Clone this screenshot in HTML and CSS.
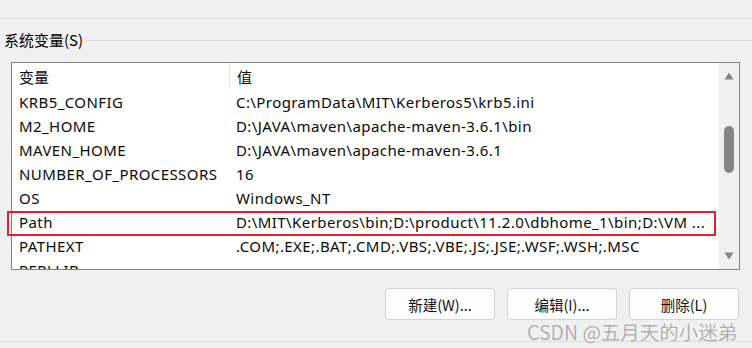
FILE: index.html
```html
<!DOCTYPE html>
<html lang="zh-CN">
<head>
<meta charset="utf-8">
<title>系统变量</title>
<link rel="stylesheet" href="styles.css">
</head>
<body>
<div class="dialog">
  <div class="topline"></div>
  <div class="group-head">
    <span class="group-label">系统变量(S)</span>
    <span class="group-rule"></span>
  </div>
  <div class="list-wrap">
    <div class="listbox">
      <div class="table">
        <div class="row head">
          <div class="c1">变量</div>
          <div class="c2">值</div>
        </div>
        <div class="row"><div class="c1">KRB5_CONFIG</div><div class="c2">C:\ProgramData\MIT\Kerberos5\krb5.ini</div></div>
        <div class="row"><div class="c1">M2_HOME</div><div class="c2">D:\JAVA\maven\apache-maven-3.6.1\bin</div></div>
        <div class="row"><div class="c1">MAVEN_HOME</div><div class="c2">D:\JAVA\maven\apache-maven-3.6.1</div></div>
        <div class="row"><div class="c1">NUMBER_OF_PROCESSORS</div><div class="c2">16</div></div>
        <div class="row"><div class="c1">OS</div><div class="c2">Windows_NT</div></div>
        <div class="row"><div class="c1">Path</div><div class="c2">D:\MIT\Kerberos\bin;D:\product\11.2.0\dbhome_1\bin;D:\VM ...</div></div>
        <div class="row"><div class="c1">PATHEXT</div><div class="c2">.COM;.EXE;.BAT;.CMD;.VBS;.VBE;.JS;.JSE;.WSF;.WSH;.MSC</div></div>
        <div class="row"><div class="c1">PERLLIB</div><div class="c2"></div></div>
      </div>
      <div class="scrollbar">
        <svg class="arrow" width="10" height="8" viewBox="0 0 10 8"><path d="M5 0.5 L9.5 7.5 L0.5 7.5 Z" fill="#858585"/></svg>
        <div class="track"><div class="thumb"></div></div>
        <svg class="arrow" width="10" height="8" viewBox="0 0 10 8"><path d="M0.5 0.5 L9.5 0.5 L5 7.5 Z" fill="#858585"/></svg>
      </div>
    </div>
    <div class="highlight"></div>
  </div>
  <div class="buttons">
    <button class="btn">新建(W)...</button>
    <button class="btn">编辑(I)...</button>
    <button class="btn">删除(L)</button>
  </div>
  <div class="bottomline"></div>
  <div class="watermark">CSDN @五月天的小迷弟</div>
</div>
</body>
</html>
```

FILE: styles.css
```css
* { box-sizing: border-box; }
html, body {
  margin: 0;
  padding: 0;
  background: #f0f0f0;
  width: 752px;
  height: 348px;
  overflow: hidden;
}
body {
  font-family: "Noto Sans", "Noto Sans CJK SC", sans-serif;
  font-size: 15px;
  color: #000;
}
.dialog {
  position: relative;
  width: 752px;
  height: 348px;
}
.topline {
  height: 19px;
  border-bottom: 1px solid #dcdcdc;
}
.group-head {
  display: flex;
  align-items: center;
  height: 42px;
  padding-left: 4px;
}
.group-label {
  font-family: "Noto Sans CJK SC", sans-serif;
  font-size: 15px;
  line-height: 20px;
  white-space: nowrap;
}
.group-rule {
  flex: 1;
  height: 1px;
  background: #dcdcdc;
  margin-left: 3px;
}
.list-wrap {
  position: relative;
  margin-left: 11px;
  width: 729px;
  height: 208px;
  margin-top: 1px;
}
.listbox {
  display: flex;
  height: 100%;
  border: 1px solid #848484;
  background: #fff;
  overflow: hidden;
}
.table {
  flex: 1;
  overflow: hidden;
  letter-spacing: 0.42px;
  color: #0a0a0a;
}
.row {
  display: flex;
  height: 24px;
  align-items: center;
  white-space: nowrap;
}
.row.head {
  height: 27px;
  font-family: "Noto Sans CJK SC", sans-serif;
  font-size: 15px;
  letter-spacing: 0;
  align-items: flex-start;
}
.head .c1 {
  padding-top: 3px;
}
.c1 {
  width: 217px;
  padding-left: 7px;
}
.c2 {
  flex: 1;
  padding-left: 7px;
}
.head .c2 {
  border-left: 1px solid #e5e5e5;
  height: 26px;
  padding-top: 3px;
}
.scrollbar {
  width: 20px;
  background: #f0f0f0;
  display: flex;
  flex-direction: column;
  align-items: center;
  padding: 9px 0 9px;
}
.arrow { display: block; }
.track {
  flex: 1;
  width: 100%;
  display: flex;
  justify-content: center;
  padding-top: 46px;
}
.thumb {
  width: 10px;
  height: 47px;
  border-radius: 5px;
  background: #858585;
}
.highlight {
  position: absolute;
  left: -4px;
  top: 149px;
  width: 709px;
  height: 25px;
  border: 2px solid #e3202f;
  pointer-events: none;
}
.buttons {
  display: flex;
  justify-content: flex-end;
  gap: 12px;
  padding-right: 13px;
  margin-top: 18px;
}
.btn {
  width: 110px;
  height: 32px;
  border: 1px solid #d3d3d3;
  border-radius: 4px;
  background: #fdfdfd;
  font-family: "Noto Sans CJK SC", sans-serif;
  font-size: 14.5px;
  color: #111;
  padding: 0;
}
.bottomline {
  position: absolute;
  left: 0;
  right: 0;
  top: 341px;
  height: 1px;
  background: #dcdcdc;
}
.watermark {
  position: absolute;
  left: 527px;
  top: 317px;
  font-family: "Noto Sans CJK SC", sans-serif;
  font-size: 19.5px;
  color: rgba(140, 140, 140, 0.7);
  text-shadow: 0 0 1px #fff;
  white-space: nowrap;
}
```
